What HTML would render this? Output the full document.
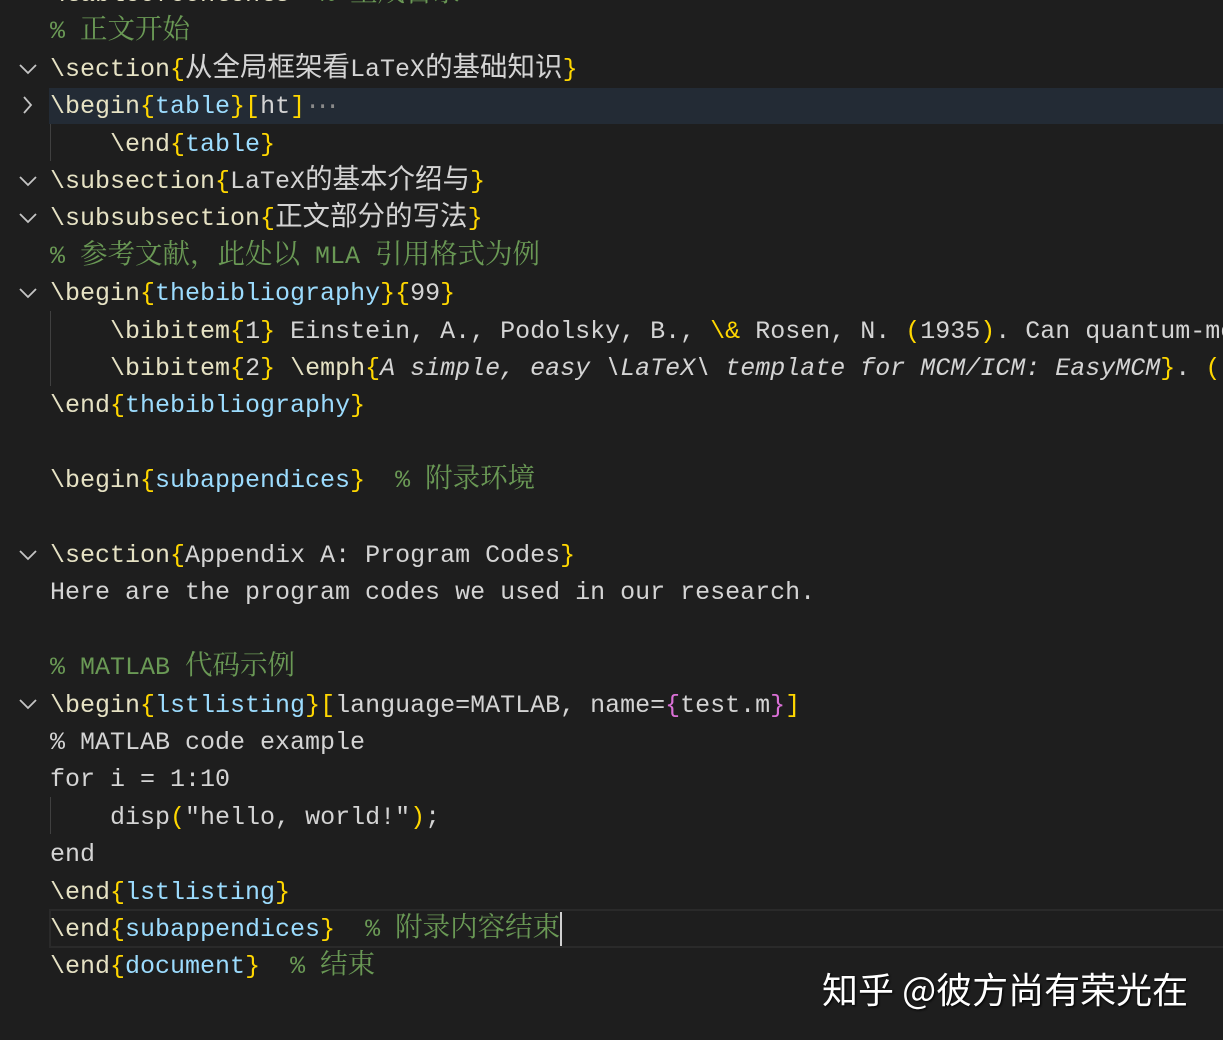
<!DOCTYPE html>
<html><head><meta charset="utf-8"><style>
html,body{margin:0;padding:0;background:#1e1e1e;width:1223px;height:1040px;overflow:hidden;position:relative}
.l{position:absolute;left:50px;width:1173px;overflow:hidden;height:37.4px;line-height:37.4px;font-family:"Liberation Mono","Noto Sans CJK SC",monospace;font-size:25px;color:#d4d4d4;white-space:pre}
.k{color:#e6e2c4}.b{color:#ffd700}.a{color:#9cdcfe}.c{color:#6a9955}.p{color:#da70d6}.i{font-style:italic}
.h{font-family:"Noto Sans CJK SC",sans-serif;font-size:27.5px;line-height:0}
.s{font-family:"Noto Serif CJK SC",serif;font-size:27.5px;line-height:0}
.z{font-family:"Noto Sans CJK SC",sans-serif}
.chev{position:absolute;left:19px;width:18px;height:12px}
.guide{position:absolute;width:1px;background:#404040}
</style></head><body>
<div style="position:absolute;left:49px;top:88px;width:1174px;height:36px;background:#232b35"></div>
<div style="position:absolute;left:49px;top:909px;width:1174px;height:35px;border:2px solid #2a2a2a;border-right:none"></div>
<div class="guide" style="left:50px;top:124px;height:37px"></div>
<div class="guide" style="left:50px;top:311px;height:75px"></div>
<div class="guide" style="left:50px;top:797px;height:37px"></div>

<svg class="chev" style="top:63px" viewBox="0 0 18 12"><path d="M1 2 L9 10 L17 2" fill="none" stroke="#c5c5c5" stroke-width="1.8"/></svg>
<svg style="position:absolute;left:21px;top:96px;width:12px;height:18px" viewBox="0 0 12 18"><path d="M3 1 L10 9 L3 17" fill="none" stroke="#c5c5c5" stroke-width="1.8"/></svg>
<svg class="chev" style="top:175px" viewBox="0 0 18 12"><path d="M1 2 L9 10 L17 2" fill="none" stroke="#c5c5c5" stroke-width="1.8"/></svg>
<svg class="chev" style="top:212px" viewBox="0 0 18 12"><path d="M1 2 L9 10 L17 2" fill="none" stroke="#c5c5c5" stroke-width="1.8"/></svg>
<svg class="chev" style="top:287px" viewBox="0 0 18 12"><path d="M1 2 L9 10 L17 2" fill="none" stroke="#c5c5c5" stroke-width="1.8"/></svg>
<svg class="chev" style="top:549px" viewBox="0 0 18 12"><path d="M1 2 L9 10 L17 2" fill="none" stroke="#c5c5c5" stroke-width="1.8"/></svg>
<svg class="chev" style="top:698px" viewBox="0 0 18 12"><path d="M1 2 L9 10 L17 2" fill="none" stroke="#c5c5c5" stroke-width="1.8"/></svg>

<div class="l" style="top:-24px"><span class="k">\tableofcontents</span>  <span class="c">% <span class="s">生成目录</span></span></div>
<div class="l" style="top:13.3px"><span class="c">% <span class="s">正文开始</span></span></div>
<div class="l" style="top:50.7px"><span class="k">\section</span><span class="b">{</span><span class="h">从全局框架看</span>LaTeX<span class="h">的基础知识</span><span class="b">}</span></div>
<div class="l" style="top:88.1px"><span class="k">\begin</span><span class="b">{</span><span class="a">table</span><span class="b">}[</span>ht<span class="b">]</span><span style="color:#8a8a8a;letter-spacing:-5px">···</span></div>
<div class="l" style="top:125.5px">    <span class="k">\end</span><span class="b">{</span><span class="a">table</span><span class="b">}</span></div>
<div class="l" style="top:162.9px"><span class="k">\subsection</span><span class="b">{</span>LaTeX<span class="h">的基本介绍与</span><span class="b">}</span></div>
<div class="l" style="top:200.3px"><span class="k">\subsubsection</span><span class="b">{</span><span class="h">正文部分的写法</span><span class="b">}</span></div>
<div class="l" style="top:237.7px"><span class="c">% <span class="s">参考文献，此处以</span> MLA <span class="s">引用格式为例</span></span></div>
<div class="l" style="top:275.1px"><span class="k">\begin</span><span class="b">{</span><span class="a">thebibliography</span><span class="b">}{</span>99<span class="b">}</span></div>
<div class="l" style="top:312.5px">    <span class="k">\bibitem</span><span class="b">{</span>1<span class="b">}</span> Einstein, A., Podolsky, B., <span class="b">\&amp;</span> Rosen, N. <span class="b">(</span>1935<span class="b">)</span>. Can quantum-mechanical</div>
<div class="l" style="top:349.9px">    <span class="k">\bibitem</span><span class="b">{</span>2<span class="b">}</span> <span class="k">\emph</span><span class="b">{</span><span class="i">A simple, easy \LaTeX\ template for MCM/ICM: EasyMCM</span><span class="b">}</span>. <span class="b">(</span></div>
<div class="l" style="top:387.3px"><span class="k">\end</span><span class="b">{</span><span class="a">thebibliography</span><span class="b">}</span></div>
<div class="l" style="top:462.1px"><span class="k">\begin</span><span class="b">{</span><span class="a">subappendices</span><span class="b">}</span>  <span class="c">% <span class="s">附录环境</span></span></div>
<div class="l" style="top:536.9px"><span class="k">\section</span><span class="b">{</span>Appendix A: Program Codes<span class="b">}</span></div>
<div class="l" style="top:574.3px">Here are the program codes we used in our research.</div>
<div class="l" style="top:649.1px"><span class="c">% MATLAB <span class="s">代码示例</span></span></div>
<div class="l" style="top:686.5px"><span class="k">\begin</span><span class="b">{</span><span class="a">lstlisting</span><span class="b">}[</span>language=MATLAB, name=<span class="p">{</span>test.m<span class="p">}</span><span class="b">]</span></div>
<div class="l" style="top:723.9px">% MATLAB code example</div>
<div class="l" style="top:761.3px">for i = 1:10</div>
<div class="l" style="top:798.7px">    disp<span class="b">(</span>"hello, world!"<span class="b">)</span>;</div>
<div class="l" style="top:836.1px">end</div>
<div class="l" style="top:873.5px"><span class="k">\end</span><span class="b">{</span><span class="a">lstlisting</span><span class="b">}</span></div>
<div class="l" style="top:910.9px"><span class="k">\end</span><span class="b">{</span><span class="a">subappendices</span><span class="b">}</span>  <span class="c">% <span class="s">附录内容结束</span></span><span style="display:inline-block;width:2px;height:34px;background:#d0d0d0;vertical-align:middle;line-height:0"></span></div>
<div class="l" style="top:948.3px"><span class="k">\end</span><span class="b">{</span><span class="a">document</span><span class="b">}</span>  <span class="c">% <span class="s">结束</span></span></div>

<div class="z" style="position:absolute;left:822px;top:963px;font-size:36px;line-height:50px;color:#fff;white-space:nowrap;text-shadow:1px 1px 2px #000">知乎 @彼方尚有荣光在</div>
</body></html>
